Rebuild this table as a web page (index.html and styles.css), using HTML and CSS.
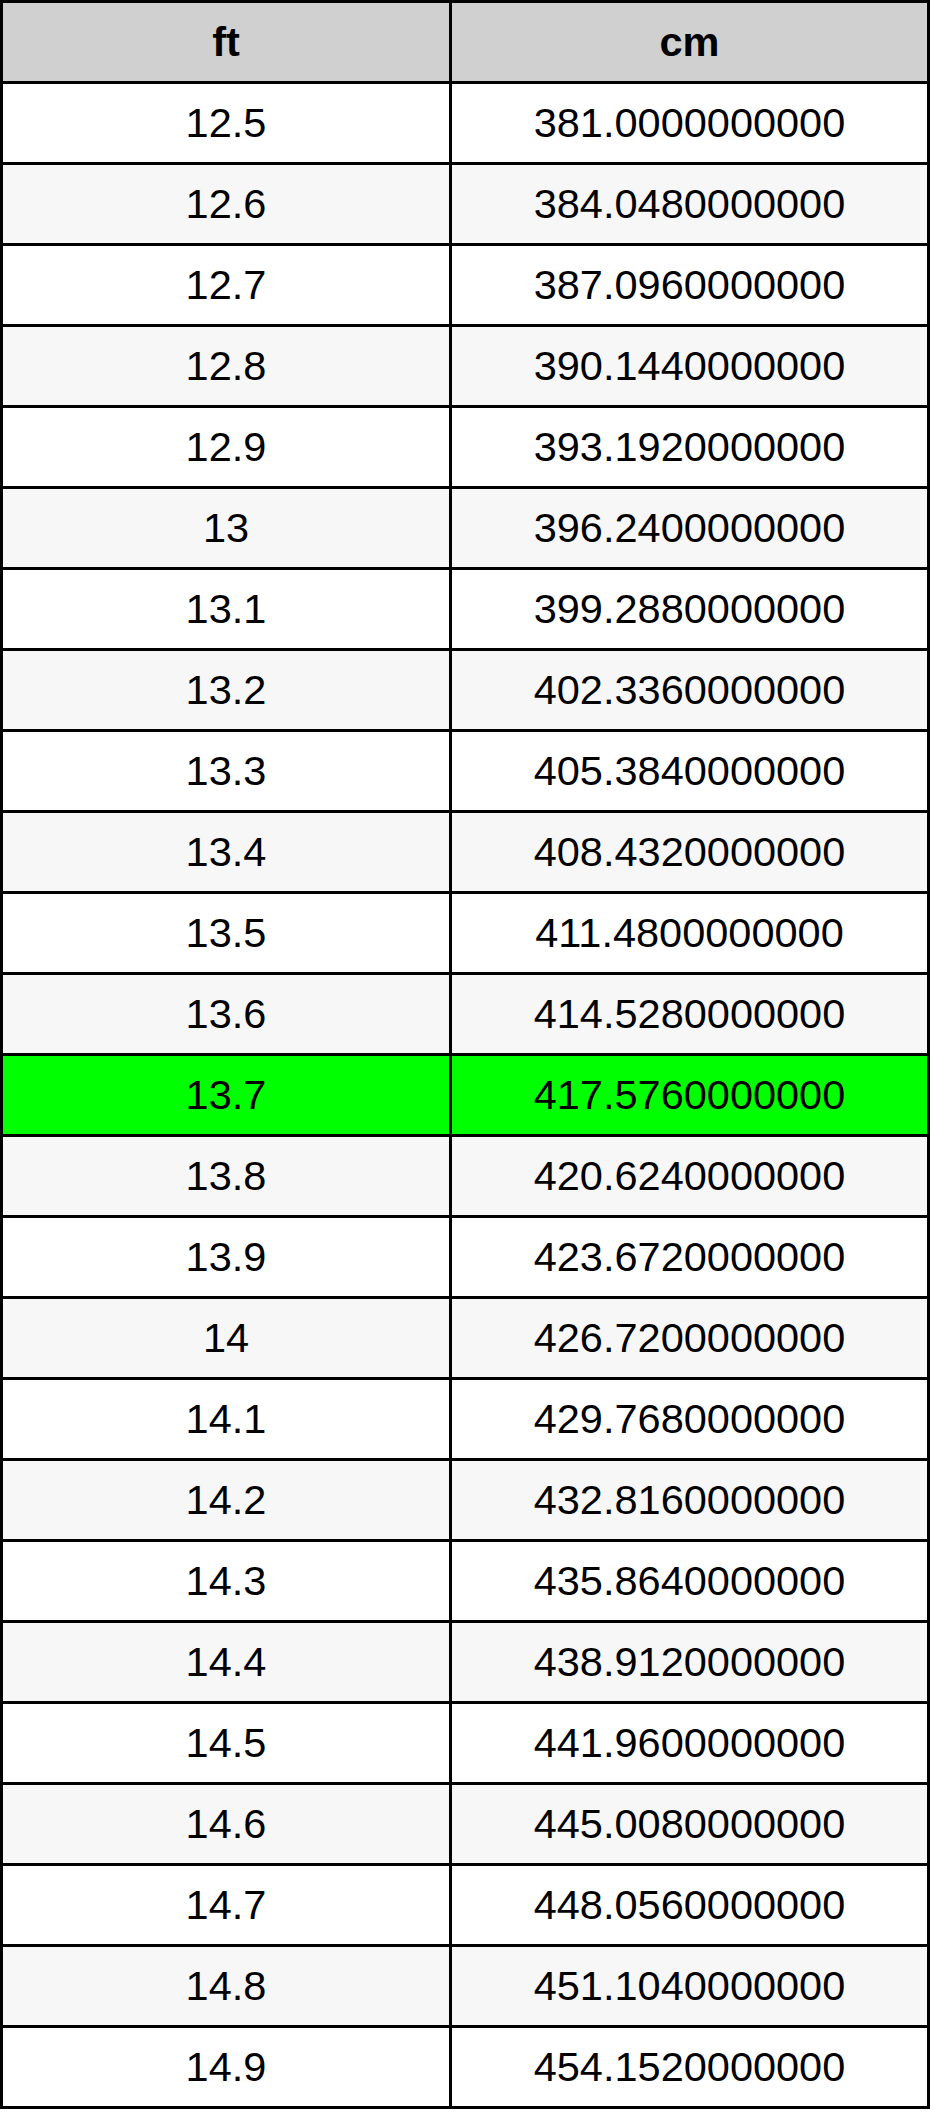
FILE: index.html
```html
<!DOCTYPE html>
<html>
<head>
<meta charset="utf-8">
<link rel="stylesheet" href="styles.css">
</head>
<body>
<table class="conv">
<colgroup><col class="c1"><col class="c2"></colgroup>
<thead>
<tr><th>ft</th><th>cm</th></tr>
</thead>
<tbody>
<tr><td>12.5</td><td>381.0000000000</td></tr>
<tr><td>12.6</td><td>384.0480000000</td></tr>
<tr><td>12.7</td><td>387.0960000000</td></tr>
<tr><td>12.8</td><td>390.1440000000</td></tr>
<tr><td>12.9</td><td>393.1920000000</td></tr>
<tr><td>13</td><td>396.2400000000</td></tr>
<tr><td>13.1</td><td>399.2880000000</td></tr>
<tr><td>13.2</td><td>402.3360000000</td></tr>
<tr><td>13.3</td><td>405.3840000000</td></tr>
<tr><td>13.4</td><td>408.4320000000</td></tr>
<tr><td>13.5</td><td>411.4800000000</td></tr>
<tr><td>13.6</td><td>414.5280000000</td></tr>
<tr class="hl"><td>13.7</td><td>417.5760000000</td></tr>
<tr><td>13.8</td><td>420.6240000000</td></tr>
<tr><td>13.9</td><td>423.6720000000</td></tr>
<tr><td>14</td><td>426.7200000000</td></tr>
<tr><td>14.1</td><td>429.7680000000</td></tr>
<tr><td>14.2</td><td>432.8160000000</td></tr>
<tr><td>14.3</td><td>435.8640000000</td></tr>
<tr><td>14.4</td><td>438.9120000000</td></tr>
<tr><td>14.5</td><td>441.9600000000</td></tr>
<tr><td>14.6</td><td>445.0080000000</td></tr>
<tr><td>14.7</td><td>448.0560000000</td></tr>
<tr><td>14.8</td><td>451.1040000000</td></tr>
<tr><td>14.9</td><td>454.1520000000</td></tr>
</tbody>
</table>
</body>
</html>
```
FILE: styles.css
```css
html, body {
  margin: 0;
  padding: 0;
  background: #ffffff;
}
.conv {
  border-collapse: collapse;
  table-layout: fixed;
  width: 930px;
  font-family: "Liberation Sans", Arial, sans-serif;
  font-size: 41.5px;
  color: #000;
}
.c1 { width: 449px; }
.c2 { width: 478px; }
.conv th, .conv td {
  border: 3px solid #000;
  height: 78px;
  padding: 0;
  text-align: center;
  vertical-align: middle;
  line-height: 1;
}
.conv th {
  background: #d0d0d0;
  font-weight: bold;
}
.conv tbody tr:nth-child(odd) td { background: #ffffff; }
.conv tbody tr:nth-child(even) td { background: #f7f7f7; }
.conv tbody tr.hl td { background: #00ff00; }
```
